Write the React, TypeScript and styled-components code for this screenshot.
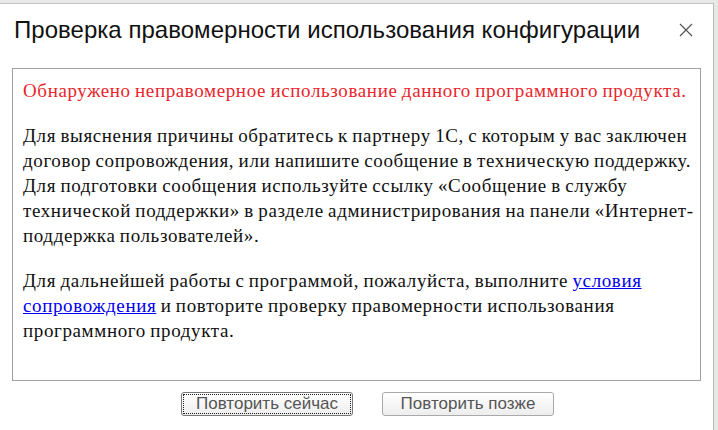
import React from 'react'
import styled, { createGlobalStyle } from 'styled-components'

const GlobalStyle = createGlobalStyle`
  html, body {
    margin: 0;
    padding: 0;
    background: #e6e9e6;
    overflow: hidden;
  }
`

export default function App() {
  return (
    <>
      <GlobalStyle />
      <Window>
        <Header>
          <Title>Проверка правомерности использования конфигурации</Title>
          <CloseButton aria-label='Закрыть'>
            <svg width='14' height='14' viewBox='0 0 14 14'>
              <path d='M1 1 L13 13 M13 1 L1 13' stroke='#555' strokeWidth='1.2' fill='none' />
            </svg>
          </CloseButton>
        </Header>
        <MessageBox>
          <Paragraph $warning>
            Обнаружено неправомерное использование данного программного продукта.
          </Paragraph>
          <Paragraph>
            Для выяснения причины обратитесь к партнеру 1С, с которым у вас заключен<br />
            договор сопровождения, или напишите сообщение в техническую поддержку.<br />
            Для подготовки сообщения используйте ссылку «Сообщение в службу<br />
            технической поддержки» в разделе администрирования на панели «Интернет-<br />
            поддержка пользователей».
          </Paragraph>
          <Paragraph>
            Для дальнейшей работы с программой, пожалуйста, выполните{' '}
            <Link href='#'>условия</Link><br />
            <Link href='#'>сопровождения</Link> и повторите проверку правомерности использования<br />
            программного продукта.
          </Paragraph>
        </MessageBox>
        <ButtonBar>
          <Button $focused>Повторить сейчас</Button>
          <Button>Повторить позже</Button>
        </ButtonBar>
      </Window>
    </>
  )
}

const Window = styled.div`
  margin-top: 3px;
  width: 714px;
  height: 427px;
  background: #fff;
  border-top: 1px solid #c4c4c4;
  border-right: 1px solid #b9b9b9;
  box-sizing: border-box;
  display: flex;
  flex-direction: column;
`

const Header = styled.div`
  display: flex;
  align-items: center;
  justify-content: space-between;
  height: 52px;
  padding: 0 19px 0 14px;
  box-sizing: border-box;
`

const Title = styled.h1`
  margin: 0;
  font-family: 'Liberation Sans', Arial, sans-serif;
  font-weight: 400;
  font-size: 24px;
  color: #111;
  letter-spacing: 0.03px;
  white-space: nowrap;
`

const CloseButton = styled.button`
  border: none;
  background: none;
  padding: 0;
  width: 16px;
  height: 16px;
  display: flex;
  align-items: center;
  justify-content: center;
  cursor: pointer;
`

const MessageBox = styled.div`
  margin: 12px 0 0 12px;
  width: 689px;
  height: 313px;
  box-sizing: border-box;
  border: 1px solid #a0a0a0;
  padding: 9px 4px 0 10px;
`

const Paragraph = styled.p<{ $warning?: boolean }>`
  margin: 0 0 20px 0;
  font-family: 'Liberation Serif', 'Times New Roman', serif;
  font-size: 19px;
  line-height: 25px;
  letter-spacing: 0.62px;
  word-spacing: -1px;
  white-space: nowrap;
  color: ${p => (p.$warning ? '#e8262c' : '#111')};
`

const Link = styled.a`
  color: #0000ee;
  text-decoration: underline;
`

const ButtonBar = styled.div`
  display: flex;
  gap: 29px;
  padding: 11px 0 0 181px;
`

const Button = styled.button<{ $focused?: boolean }>`
  width: 172px;
  height: 24px;
  box-sizing: border-box;
  border: 1px solid #a9a9a9;
  border-radius: 3px;
  background: linear-gradient(#ffffff, #ededed);
  font-family: 'Liberation Sans', Arial, sans-serif;
  font-size: 17px;
  color: #555;
  padding: 0;
  outline: ${p => (p.$focused ? '1px dotted #222' : 'none')};
  outline-offset: -3px;
  ${p => p.$focused && 'border-color: #777;'}
`
